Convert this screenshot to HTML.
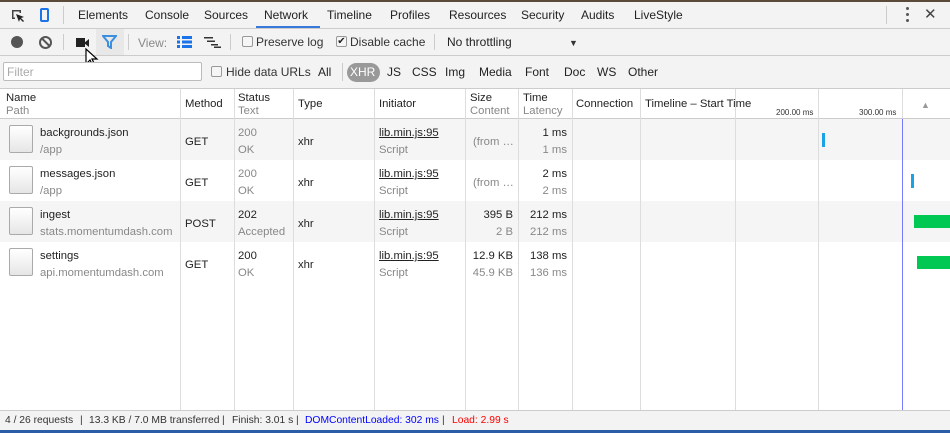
<!DOCTYPE html>
<html><head><meta charset="utf-8"><style>
*{margin:0;padding:0;box-sizing:border-box}
body{width:950px;height:433px;overflow:hidden;background:#fff;font-family:"Liberation Sans",sans-serif;font-size:12px;line-height:14px;color:#222;position:relative}
.a{position:absolute;white-space:nowrap}
.t{font-size:11.3px;line-height:14px}
.s{font-size:10.3px;line-height:14px;color:#333}
.r{text-align:right}
.g{color:#888}
.vl{position:absolute;width:1px;background:#ddd}
.hl{position:absolute;height:1px;background:#ccc;left:0;width:950px}
u{text-decoration:underline}
</style></head><body>
<div class="a" style="left:0;top:0;width:950px;height:2px;background:#5a4a3a"></div>
<div class="a" style="left:0;top:2px;width:950px;height:27px;background:#f3f3f3"></div>
<div class="hl" style="top:28px;background:#ccc"></div>
<div class="a" style="left:0;top:29px;width:950px;height:27px;background:#f3f3f3"></div>
<div class="hl" style="top:55px"></div>
<div class="a" style="left:0;top:56px;width:950px;height:33px;background:#f3f3f3"></div>
<div class="hl" style="top:88px"></div>
<!-- tabs -->
<svg class="a" style="left:10px;top:8px" width="16" height="16" viewBox="0 0 16 16"><path d="M2 2h9v3h-1.5V3.5h-6v6H5V11H2z" fill="#444"/><path d="M6 6l8 3-3 1 3 3-1 1-3-3-1 3z" fill="#222"/></svg>
<div class="a" style="left:40px;top:8px;width:9px;height:14px;border:2px solid #1a73e8;border-radius:2px"></div>
<div class="vl" style="left:63px;top:6px;height:18px;background:#ccc"></div>
<div class="a" style="left:78px;top:8px">Elements</div>
<div class="a" style="left:145px;top:8px">Console</div>
<div class="a" style="left:204px;top:8px">Sources</div>
<div class="a" style="left:264px;top:8px;color:#222">Network</div>
<div class="a" style="left:256px;top:26px;width:64px;height:2px;background:#3879d9"></div>
<div class="a" style="left:327px;top:8px">Timeline</div>
<div class="a" style="left:390px;top:8px">Profiles</div>
<div class="a" style="left:449px;top:8px">Resources</div>
<div class="a" style="left:521px;top:8px">Security</div>
<div class="a" style="left:581px;top:8px">Audits</div>
<div class="a" style="left:634px;top:8px">LiveStyle</div>
<div class="vl" style="left:886px;top:6px;height:18px;background:#ccc"></div>
<div class="a" style="left:903px;top:7px;width:3px;height:3px;border-radius:50%;background:#555;left:906px"></div>
<div class="a" style="left:906px;top:13px;width:3px;height:3px;border-radius:50%;background:#555"></div>
<div class="a" style="left:906px;top:19px;width:3px;height:3px;border-radius:50%;background:#555"></div>
<div class="a" style="left:924px;top:6px;font-size:15px;line-height:18px;color:#444">✕</div>
<!-- toolbar -->
<div class="a" style="left:11px;top:36px;width:12px;height:12px;border-radius:50%;background:#555"></div>
<div class="a" style="left:39px;top:36px;width:13px;height:13px;border-radius:50%;border:2px solid #555"></div>
<div class="a" style="left:40px;top:41px;width:11px;height:2px;background:#555;transform:rotate(45deg)"></div>
<div class="vl" style="left:63px;top:34px;height:16px;background:#ccc"></div>
<div class="a" style="left:76px;top:38px;width:9px;height:9px;background:#222"></div>
<div class="a" style="left:84px;width:0;height:0;border-top:4px solid transparent;border-bottom:4px solid transparent;border-right:5px solid #222;top:38.5px"></div>
<div class="a" style="left:96px;top:29px;width:28px;height:26px;background:#e8e8e8"></div>
<svg class="a" style="left:102px;top:35px" width="15" height="14" viewBox="0 0 15 14"><path d="M1 1h13l-5 6v6l-3-2V7z" fill="none" stroke="#3c8ede" stroke-width="2"/></svg>
<div class="vl" style="left:128px;top:34px;height:16px;background:#ccc"></div>
<div class="a g" style="left:138px;top:36px">View:</div>
<svg class="a" style="left:177px;top:36px" width="15" height="12"><rect x="0" y="0" width="3" height="3" fill="#1a73e8"/><rect x="5" y="0" width="10" height="3" fill="#1a73e8"/><rect x="0" y="4.5" width="3" height="3" fill="#1a73e8"/><rect x="5" y="4.5" width="10" height="3" fill="#1a73e8"/><rect x="0" y="9" width="3" height="3" fill="#1a73e8"/><rect x="5" y="9" width="10" height="3" fill="#1a73e8"/></svg>
<svg class="a" style="left:204px;top:36px" width="17" height="12"><rect x="0" y="1" width="9" height="1.5" fill="#333"/><rect x="3" y="4.5" width="8" height="1.5" fill="#333"/><rect x="7" y="8" width="7" height="1.5" fill="#333"/><rect x="10" y="10.5" width="7" height="1.5" fill="#333"/></svg>
<div class="vl" style="left:230px;top:34px;height:16px;background:#ccc"></div>
<div class="a" style="left:242px;top:36px;width:11px;height:11px;border:1px solid #999;border-radius:2px;background:#f6f6f6"></div>
<div class="a" style="left:256px;top:35px;color:#333">Preserve log</div>
<div class="a" style="left:336px;top:36px;width:11px;height:11px;border:1px solid #999;border-radius:2px;background:#f6f6f6;font-size:10px;line-height:9px;text-align:center">✔</div>
<div class="a" style="left:350px;top:35px;color:#333">Disable cache</div>
<div class="vl" style="left:434px;top:34px;height:16px;background:#ccc"></div>
<div class="a" style="left:447px;top:35px">No throttling</div>
<div class="a" style="left:569px;top:36px;font-size:9px;color:#333">▼</div>
<!-- cursor -->
<svg class="a" style="left:85px;top:48px" width="14" height="20" viewBox="0 0 14 20"><path d="M1 1v15l4-4 3 6 2-1-3-6h5z" fill="#fff" stroke="#000" stroke-width="1.2"/></svg>
<!-- filter bar -->
<div class="a" style="left:3px;top:62px;width:199px;height:19px;border:1px solid #bbb;background:#fff;border-radius:2px"></div>
<div class="a" style="left:7px;top:65px;color:#aaa">Filter</div>
<div class="a" style="left:211px;top:66px;width:11px;height:11px;border:1px solid #999;border-radius:2px;background:#f6f6f6"></div>
<div class="a" style="left:226px;top:65px;color:#333">Hide data URLs</div>
<div class="a" style="left:318px;top:65px">All</div>
<div class="vl" style="left:342px;top:63px;height:18px;background:#ccc"></div>
<div class="a" style="left:347px;top:63px;width:33px;height:19px;border-radius:10px;background:#999"></div>
<div class="a" style="left:350px;top:65px;color:#fff">XHR</div>
<div class="a" style="left:387px;top:65px">JS</div>
<div class="a" style="left:412px;top:65px">CSS</div>
<div class="a" style="left:445px;top:65px">Img</div>
<div class="a" style="left:479px;top:65px">Media</div>
<div class="a" style="left:525px;top:65px">Font</div>
<div class="a" style="left:564px;top:65px">Doc</div>
<div class="a" style="left:597px;top:65px">WS</div>
<div class="a" style="left:628px;top:65px">Other</div>
<!-- header -->
<div class="hl" style="top:118px;background:#ccc"></div>
<div class="a t" style="left:6px;top:91px">Name</div><div class="a t g" style="left:6px;top:104px">Path</div>
<div class="a t" style="left:185px;top:97px">Method</div>
<div class="a t" style="left:238px;top:91px">Status</div><div class="a t g" style="left:238px;top:104px">Text</div>
<div class="a t" style="left:298px;top:97px">Type</div>
<div class="a t" style="left:379px;top:97px">Initiator</div>
<div class="a t" style="left:470px;top:91px">Size</div><div class="a t g" style="left:470px;top:104px">Content</div>
<div class="a t" style="left:523px;top:91px">Time</div><div class="a t g" style="left:523px;top:104px">Latency</div>
<div class="a t" style="left:576px;top:97px">Connection</div>
<div class="a t" style="left:645px;top:97px">Timeline – Start Time</div>
<div class="a" style="left:776px;top:108px;font-size:8px;line-height:9px;color:#333">200.00 ms</div>
<div class="a" style="left:859px;top:108px;font-size:8px;line-height:9px;color:#333">300.00 ms</div>
<div class="a" style="left:921px;top:98px;font-size:9px;color:#999">▲</div>
<!-- rows bg -->
<div class="a" style="left:0;top:119px;width:950px;height:41px;background:#f5f5f5"></div>
<div class="a" style="left:0;top:201px;width:950px;height:41px;background:#f5f5f5"></div>
<!-- col lines -->
<div class="vl" style="left:180px;top:89px;height:321px"></div>
<div class="vl" style="left:234px;top:89px;height:321px"></div>
<div class="vl" style="left:293px;top:89px;height:321px"></div>
<div class="vl" style="left:374px;top:89px;height:321px"></div>
<div class="vl" style="left:465px;top:89px;height:321px"></div>
<div class="vl" style="left:518px;top:89px;height:321px"></div>
<div class="vl" style="left:572px;top:89px;height:321px"></div>
<div class="vl" style="left:640px;top:89px;height:321px"></div>
<div class="vl" style="left:735px;top:89px;height:321px"></div>
<div class="vl" style="left:818px;top:89px;height:321px"></div>
<div class="vl" style="left:902px;top:89px;height:29px"></div>
<div class="a" style="left:902px;top:119px;width:1px;height:291px;background:#7a7aff"></div>
<!-- icons -->
<div class="a" style="left:9px;top:125px;width:24px;height:28px;border:1px solid #aaa;background:linear-gradient(#fff,#e6e6e6);border-radius:2px"></div>
<div class="a" style="left:9px;top:166px;width:24px;height:28px;border:1px solid #aaa;background:linear-gradient(#fff,#e6e6e6);border-radius:2px"></div>
<div class="a" style="left:9px;top:207px;width:24px;height:28px;border:1px solid #aaa;background:linear-gradient(#fff,#e6e6e6);border-radius:2px"></div>
<div class="a" style="left:9px;top:248px;width:24px;height:28px;border:1px solid #aaa;background:linear-gradient(#fff,#e6e6e6);border-radius:2px"></div>

<div style="position:absolute;left:0;top:2px;width:950px;height:300px">
<div class="a t" style="left:40px;top:124px">backgrounds.json</div><div class="a t g" style="left:40px;top:141px">/app</div>
<div class="a t" style="left:185px;top:133px">GET</div>
<div class="a t g" style="left:238px;top:124px">200</div><div class="a t g" style="left:238px;top:141px">OK</div>
<div class="a t" style="left:298px;top:133px">xhr</div>
<div class="a t" style="left:379px;top:124px"><u>lib.min.js:95</u></div><div class="a t g" style="left:379px;top:141px">Script</div>
<div class="a t g" style="left:473px;top:133px">(from …</div>
<div class="a t r" style="left:520px;width:47px;top:124px">1 ms</div><div class="a t g r" style="left:520px;width:47px;top:141px">1 ms</div>

<div class="a t" style="left:40px;top:165px">messages.json</div><div class="a t g" style="left:40px;top:182px">/app</div>
<div class="a t" style="left:185px;top:174px">GET</div>
<div class="a t g" style="left:238px;top:165px">200</div><div class="a t g" style="left:238px;top:182px">OK</div>
<div class="a t" style="left:298px;top:174px">xhr</div>
<div class="a t" style="left:379px;top:165px"><u>lib.min.js:95</u></div><div class="a t g" style="left:379px;top:182px">Script</div>
<div class="a t g" style="left:473px;top:174px">(from …</div>
<div class="a t r" style="left:520px;width:47px;top:165px">2 ms</div><div class="a t g r" style="left:520px;width:47px;top:182px">2 ms</div>

<div class="a t" style="left:40px;top:206px">ingest</div><div class="a t g" style="left:40px;top:223px">stats.momentumdash.com</div>
<div class="a t" style="left:185px;top:215px">POST</div>
<div class="a t" style="left:238px;top:206px">202</div><div class="a t g" style="left:238px;top:223px">Accepted</div>
<div class="a t" style="left:298px;top:215px">xhr</div>
<div class="a t" style="left:379px;top:206px"><u>lib.min.js:95</u></div><div class="a t g" style="left:379px;top:223px">Script</div>
<div class="a t r" style="left:466px;width:47px;top:206px">395 B</div><div class="a t g r" style="left:466px;width:47px;top:223px">2 B</div>
<div class="a t r" style="left:520px;width:47px;top:206px">212 ms</div><div class="a t g r" style="left:520px;width:47px;top:223px">212 ms</div>

<div class="a t" style="left:40px;top:247px">settings</div><div class="a t g" style="left:40px;top:264px">api.momentumdash.com</div>
<div class="a t" style="left:185px;top:256px">GET</div>
<div class="a t" style="left:238px;top:247px">200</div><div class="a t g" style="left:238px;top:264px">OK</div>
<div class="a t" style="left:298px;top:256px">xhr</div>
<div class="a t" style="left:379px;top:247px"><u>lib.min.js:95</u></div><div class="a t g" style="left:379px;top:264px">Script</div>
<div class="a t r" style="left:466px;width:47px;top:247px">12.9 KB</div><div class="a t g r" style="left:466px;width:47px;top:264px">45.9 KB</div>
<div class="a t r" style="left:520px;width:47px;top:247px">138 ms</div><div class="a t g r" style="left:520px;width:47px;top:264px">136 ms</div>
</div>
<!-- bars -->
<div class="a" style="left:822px;top:133px;width:3px;height:14px;background:#1ba1e6"></div>
<div class="a" style="left:911px;top:174px;width:3px;height:14px;background:#1ba1e6"></div>
<div class="a" style="left:914px;top:215px;width:36px;height:13px;background:#00c853"></div>
<div class="a" style="left:917px;top:256px;width:33px;height:13px;background:#00c853"></div>
<!-- status -->
<div class="a" style="left:0;top:410px;width:950px;height:20px;background:#f3f3f3;border-top:1px solid #ccc"></div>
<div class="a s" style="left:5px;top:414px">4 / 26 requests</div>
<div class="a s" style="left:80px;top:414px">|</div>
<div class="a s" style="left:89px;top:414px">13.3 KB / 7.0 MB transferred</div>
<div class="a s" style="left:222px;top:414px">|</div>
<div class="a s" style="left:232px;top:414px">Finish: 3.01 s</div>
<div class="a s" style="left:296px;top:414px">|</div>
<div class="a s" style="left:305px;top:414px;color:#00f">DOMContentLoaded: 302 ms</div>
<div class="a s" style="left:442px;top:414px">|</div>
<div class="a s" style="left:452px;top:414px;color:#f00">Load: 2.99 s</div>
<div class="a" style="left:0;top:430px;width:950px;height:3px;background:#2a5ca8"></div>
</body></html>
